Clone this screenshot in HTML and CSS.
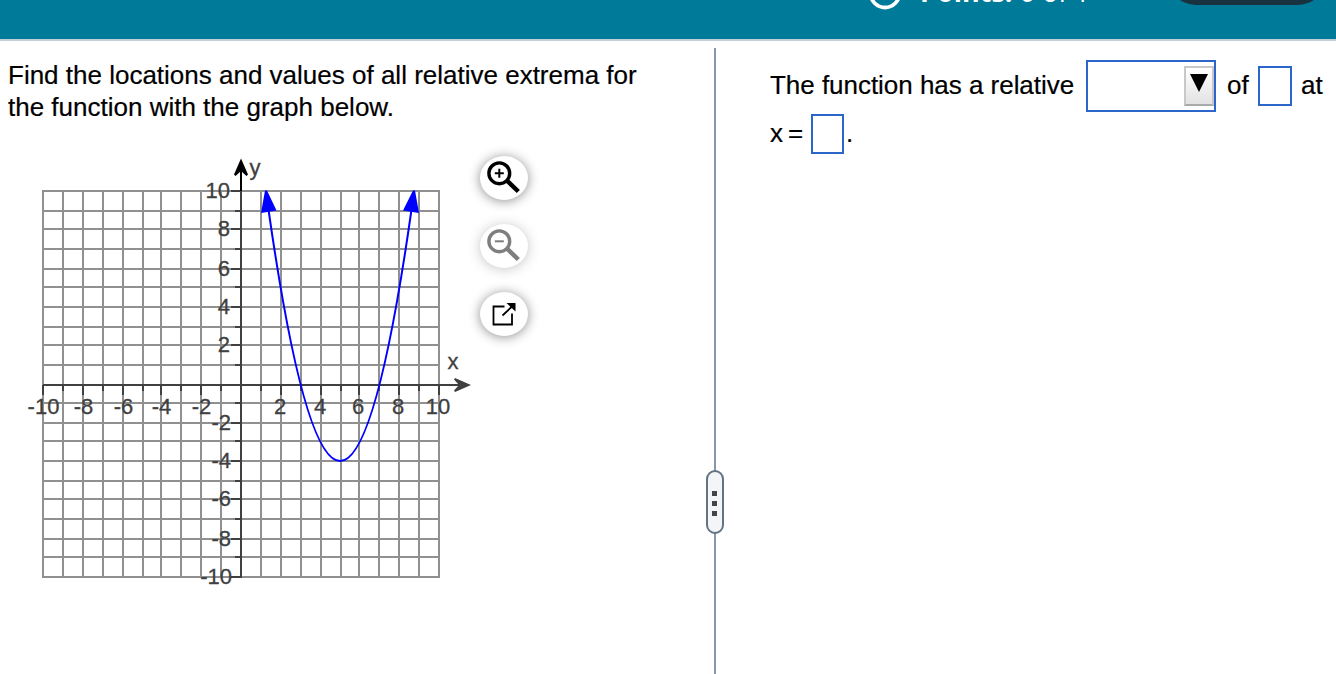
FILE: index.html
```html
<!DOCTYPE html>
<html lang="en">
<head>
<meta charset="utf-8">
<title>Relative extrema</title>
<link rel="stylesheet" href="styles.css">
</head>
<body>
<header class="topbar">
  <div class="topbar-row">
    <svg class="score-icon" width="34" height="34" viewBox="0 0 34 34"><circle cx="17" cy="17" r="14.500" fill="none" stroke="#fff" stroke-width="3.800"/></svg>
    <div class="points"><b>Points:</b> 0 of 1</div>
    <button class="save" aria-label="Save"></button>
  </div>
</header>
<main class="panes">
  <section class="question">
    <p class="prompt"><span class="line1">Find the locations and values of all relative extrema for</span><br><span class="line2">the function with the graph below.</span></p>
    <div class="figure">
      <svg class="graph" width="456" height="440" viewBox="20 150 456 440">
        <path class="grid" d="M43 190V578M63 190V578M83 190V578M103 190V578M123 190V578M143 190V578M161 190V578M181 190V578M201 190V578M221 190V578M261 190V578M281 190V578M301 190V578M321 190V578M341 190V578M359 190V578M379 190V578M399 190V578M419 190V578M439 190V578M42 191H440M42 211H440M42 229H440M42 249H440M42 269H440M42 287H440M42 307H440M42 327H440M42 345H440M42 365H440M42 403H440M42 423H440M42 441H440M42 461H440M42 481H440M42 499H440M42 519H440M42 539H440M42 557H440M42 577H440"/>
        <path class="axis" d="M43 385H460M241 191V578M43 385V395M63 385V391M83 385V395M103 385V391M123 385V395M143 385V391M161 385V395M181 385V391M201 385V395M221 385V391M261 385V391M281 385V395M301 385V391M321 385V395M341 385V391M359 385V395M379 385V391M399 385V395M419 385V391M439 385V395M231 191H241M235 211H241M231 229H241M235 249H241M231 269H241M235 287H241M231 307H241M235 327H241M231 345H241M235 365H241M235 403H241M231 423H241M235 441H241M231 461H241M235 481H241M231 499H241M235 519H241M231 539H241M235 557H241M231 577H241"/>
        <path d="M241 191V170" stroke="#000" stroke-width="2"/>
        <path d="M241 158.500L248 174.500L246.500 176L241 171L235.500 176L234 174.500Z" fill="#000"/>
        <path d="M471 385L455 392L454 390.500L459 385L454 379.500L455 378Z" fill="#404040"/>
        <g class="labels">
          <text x="249.500" y="175">y</text><text x="447.500" y="369">x</text>
          <g text-anchor="end">
            <text x="230" y="198">10</text><text x="230" y="236">8</text><text x="230" y="276">6</text><text x="230" y="314">4</text><text x="230" y="352">2</text>
            <text x="231" y="430">-2</text><text x="231" y="468">-4</text><text x="231" y="506">-6</text><text x="231" y="546">-8</text><text x="232" y="584">-10</text>
          </g>
          <g text-anchor="middle">
            <text x="43.500" y="414">-10</text><text x="83.500" y="414">-8</text><text x="123.500" y="414">-6</text><text x="161.500" y="414">-4</text><text x="201.500" y="414">-2</text>
            <text x="280" y="414">2</text><text x="320" y="414">4</text><text x="358" y="414">6</text><text x="398" y="414">8</text><text x="438" y="414">10</text>
          </g>
        </g>
        <path class="curve" d="M268.700 211Q340.200 711 411.300 211"/>
        <path d="M265 190.500H267L276.500 210.500L261 213ZM413 190.500H415L419 213L403 210.500Z" fill="#00f"/>
      </svg>
      <div class="tools">
        <button class="tool" aria-label="Zoom in"><svg width="48" height="44" viewBox="0 0 48 44"><g fill="none" stroke="#000"><circle cx="19.300" cy="17.300" r="10.400" stroke-width="3.400"/><path d="M19.300 12.800V21.800M14.800 17.300H23.800" stroke-width="2"/><path d="M26.700 24.300L38.300 35.500" stroke-width="4.500"/></g></svg></button>
        <button class="tool faded" aria-label="Zoom out"><svg width="48" height="44" viewBox="0 0 48 44"><g fill="none" stroke="#000"><circle cx="19.300" cy="17.300" r="10.400" stroke-width="3.400"/><path d="M14.800 17.300H23.800" stroke-width="2"/><path d="M26.700 24.300L38.300 35.500" stroke-width="4.500"/></g></svg></button>
        <button class="tool" aria-label="Open in new window"><svg width="48" height="44" viewBox="0 0 48 44"><path d="M24.500 14.500H13.500V32.500H32V21.500M22.500 23.500L32 14.500" fill="none" stroke="#000" stroke-width="1.800"/><path d="M26.500 11H35.500V19.500Z" fill="#000"/></svg></button>
      </div>
    </div>
  </section>
  <div class="divider">
    <div class="handle"><i></i><i></i><i></i></div>
  </div>
  <section class="answer">
    <div class="row first">
      <span class="lead">The function has a relative</span>
      <span class="select"><span class="arrow"><svg width="18" height="18" viewBox="0 0 18 18"><path d="M0 0H18L9 18Z"/></svg></span></span>
      <span class="of">of</span><span class="blank"></span><span class="at">at</span>
    </div>
    <div class="row second"><span class="var">x</span><span class="eq">=</span><span class="blank"></span><span class="dot">.</span></div>
  </section>
</main>
</body>
</html>
```
FILE: styles.css
```css
* { box-sizing: border-box; }
html, body { height: 100%; }
body { margin: 0; overflow: hidden; display: flex; flex-direction: column; background: #fff; color: #000; font-family: "Liberation Sans", Arial, sans-serif; font-size: 26px; }
button { border: 0; padding: 0; }
.topbar { height: 41px; flex: none; background: #007a99; border-bottom: 2px solid #c5cddb; overflow: hidden; }
.topbar-row { display: flex; align-items: center; margin-top: -53px; height: 90px; padding: 0 10px 0 868px; color: #fff; }
.score-icon { flex: none; margin-bottom: -1px; }
.points { font: 27px/34px "Open Sans", sans-serif; margin-left: 18px; white-space: pre; }
.save { margin-left: auto; width: 158px; height: 56px; border-radius: 28px; background: #19323f; margin-bottom: 31px; }
.panes { display: flex; flex: 1; min-height: 0; }
.question { width: 706px; flex: none; padding: 18px 0 0 8px; }
.prompt { margin: 0; line-height: 32px; white-space: nowrap; -webkit-text-stroke: .2px; }
.figure { display: flex; margin: 27px 0 0 12px; }
.graph { flex: none; display: block; }
.grid { fill: none; stroke: #909090; stroke-width: 2; }
.axis { fill: none; stroke: #404040; stroke-width: 2; }
.curve { fill: none; stroke: #00f; stroke-width: 2; }
.labels { font-size: 22px; fill: #404040; stroke: #404040; stroke-width: .3; }
.tools { display: flex; flex-direction: column; gap: 24px; padding: 6px 0 0 4px; }
.tool { width: 48px; height: 44px; border-radius: 50%; background: #fff; box-shadow: 0 1px 12px rgba(0,0,0,.45); }
.tool svg { display: block; }
.faded { opacity: .5; }
.divider { width: 18px; flex: none; margin-top: 7px; display: flex; flex-direction: column; align-items: center; background: linear-gradient(#8995a8, #8995a8) 8px 0 / 2px 100% no-repeat; }
.handle { margin-top: 422px; width: 18px; height: 64px; border: 2px solid #637381; border-radius: 9px; background: #f3f5f8; display: flex; flex-direction: column; align-items: center; justify-content: center; gap: 5px; padding-top: 3px; padding-right: 2px; }
.handle i { width: 5px; height: 5px; background: #444; }
.answer { padding: 19px 0 0 46px; flex: none; width: 612px; }
.row { display: flex; align-items: center; white-space: nowrap; -webkit-text-stroke: .2px; }
.first { height: 52px; }
.second { height: 40px; margin-top: 2px; }
.lead { width: 316px; letter-spacing: -.03px; }
.lead, .of, .at, .var, .eq, .dot { padding-bottom: 2px; }
.select { width: 130px; height: 52px; border: 2px solid #2c66cb; display: flex; justify-content: flex-end; align-items: center; }
.arrow { width: 30px; height: 40px; border: 2px solid #c8c8c8; border-bottom-color: #aaa; background: linear-gradient(#fff, #e2e2e2); padding: 6px 0 0 4px; }
.arrow svg { display: block; }
.of { width: 42px; padding-left: 11px; }
.blank { width: 34px; height: 40px; border: 2px solid #2c66cb; }
.at { padding-left: 9px; }
.eq { width: 28px; padding-left: 5px; }
.second .blank { width: 33px; }
.dot { padding-left: 2px; }
```
